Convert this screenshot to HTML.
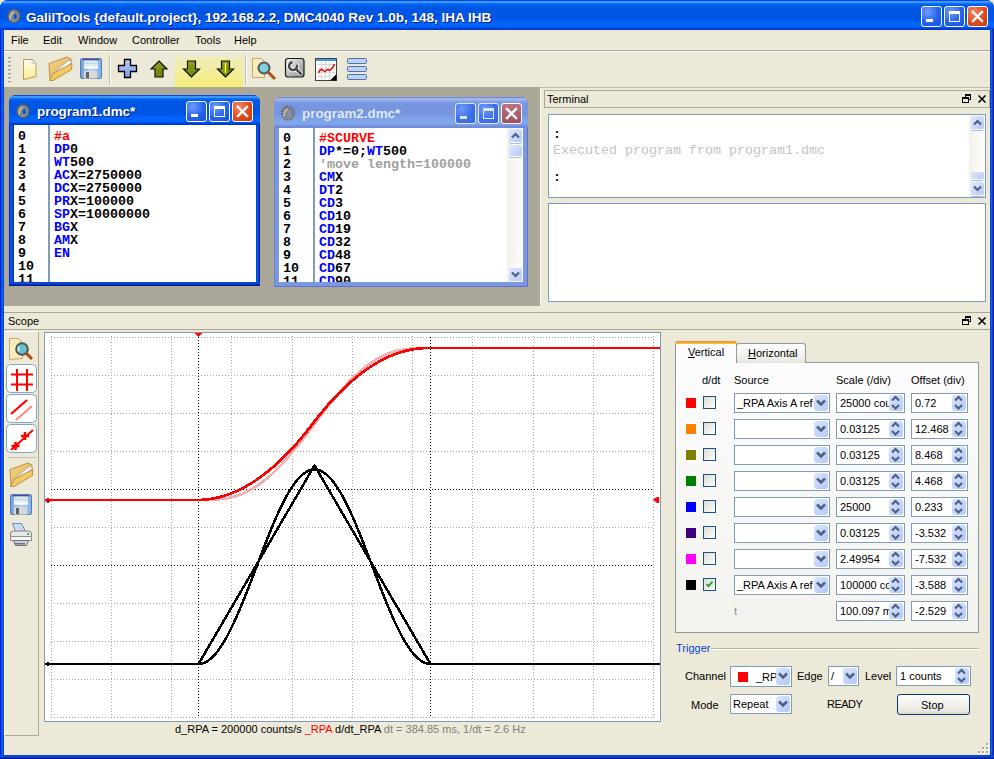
<!DOCTYPE html>
<html><head><meta charset="utf-8">
<style>
*{margin:0;padding:0;box-sizing:border-box}
html,body{width:994px;height:759px;overflow:hidden;background:#ece9d8}
body{position:relative;font-family:"Liberation Sans",sans-serif;font-size:11px;color:#000}
.a{position:absolute}
.t{position:absolute;white-space:nowrap;line-height:13px}
#frame{left:0;top:0;width:994px;height:759px;background:linear-gradient(to right,#0019cf 0,#0831d9 1px,#166aee 2px,#0855dd 3px,#0831d9 4px);border-radius:8px 8px 0 0;overflow:hidden}
#frameR{left:990px;top:29px;width:4px;height:730px;background:linear-gradient(to right,#0831d9 0,#0855dd 1px,#166aee 2px,#001ea0 3px)}
#frameB{left:0;top:755px;width:994px;height:4px;background:linear-gradient(to bottom,#0831d9 0,#0855dd 1px,#0a43c8 2px,#001ea0 3px)}
#title{left:0;top:0;width:994px;height:30px;border-radius:8px 8px 0 0;
 background:linear-gradient(to bottom,#0a48e0 0,#0a48e0 1px,#3d95ff 1px,#3d95ff 3px,#0a72ff 3.5px,#005ee9 5px,#0055e2 9px,#0054e3 19px,#0060f6 21px,#0066ff 26px,#0058f0 27.5px,#0040d8 28.5px,#0038c8 30px)}
#client{left:4px;top:30px;width:986px;height:725px;background:#ece9d8}
.ttl{color:#fff;font-weight:bold;text-shadow:1px 1px 0 #0a1f80}
.xpbtn{position:absolute;width:21px;height:21px;border:1px solid #fff;border-radius:3px;
 background:radial-gradient(circle at 30% 25%,#6f9cff 0,#2663ee 55%,#1c4fd8 100%)}
.xpclose{background:radial-gradient(circle at 30% 25%,#f08a6a 0,#e24c20 50%,#c63a0e 100%)}
.menu{top:34px}
.mdi{left:4px;top:87px;width:536px;height:219px;background:#aca899}
.code{font-family:"Liberation Mono",monospace;font-weight:bold;font-size:13.33px;line-height:13px}
.kw{color:#0000ff}.lb{color:#ff0000}.cm{color:#a0a0a0}
.cb{background:#fff;border:1px solid #7f9db9}
.dd{border-radius:3px;background:linear-gradient(135deg,#dbe5fd 0,#c6d6fb 50%,#b4c9f7 100%)}
.chk{width:13px;height:13px;border:1px solid #1c5180;background:linear-gradient(135deg,#dcdcd7 0,#f0f0ea 60%,#fff 100%)}
.sbb{border-radius:2px;background:linear-gradient(135deg,#e0e8fd 0,#c6d6fb 60%,#b7cbf8 100%);box-shadow:0 1px 0 #fff,0 2px 0 #a9bde6}
</style></head><body>
<div id="frame" class="a"></div>
<div id="title" class="a"></div>
<div id="frameR" class="a"></div>
<div id="frameB" class="a"></div>
<div id="client" class="a"></div>
<!-- TITLE -->
<svg class="a" style="left:6px;top:8px" width="16" height="16" viewBox="0 0 16 16"><defs><mask id="gm6"><rect width="16" height="16" fill="#fff"/><ellipse cx="9.2" cy="8.4" rx="1.5" ry="2.7" fill="#000"/></mask></defs><g mask="url(#gm6)"><polygon points="15.27,8.00 15.23,8.83 13.31,9.23 13.16,9.82 14.64,11.21 14.29,11.95 12.39,11.47 12.03,11.95 12.86,13.87 12.27,14.39 10.71,13.11 10.21,13.39 10.25,15.51 9.51,15.73 8.57,13.87 8.00,13.90 7.24,15.86 6.49,15.73 6.32,13.61 5.79,13.39 4.37,14.84 3.73,14.39 4.37,12.38 3.97,11.95 2.12,12.64 1.71,11.95 3.04,10.40 2.84,9.82 0.89,9.64 0.77,8.83 2.57,8.00 2.60,7.38 0.89,6.36 1.09,5.56 3.04,5.60 3.30,5.05 2.12,3.36 2.60,2.71 4.37,3.62 4.81,3.23 4.37,1.16 5.04,0.78 6.32,2.39 6.87,2.23 7.24,0.14 8.00,0.10 8.57,2.13 9.13,2.23 10.25,0.49 10.96,0.78 10.71,2.89 11.19,3.23 12.86,2.13 13.40,2.71 12.39,4.53 12.70,5.05 14.64,4.79 14.91,5.56 13.31,6.77 13.40,7.38" fill="#5e5e5e"/><ellipse cx="8" cy="8" rx="5.6" ry="6" fill="#858585"/><path d="M4.2 11.5q-0.5-5 3.5-7.5" stroke="#c4bfae" stroke-width="1.6" fill="none"/><path d="M6 13.2q4 1 6.2-3" stroke="#9a9484" stroke-width="1.2" fill="none"/></g></svg>
<div class="t ttl" style="left:26px;top:10px;font-size:13.5px;line-height:16px">GalilTools {default.project}, 192.168.2.2, DMC4040 Rev 1.0b, 148, IHA IHB</div>
<div class="xpbtn" style="left:921px;top:6px"><svg width="21" height="21" viewBox="0 0 21 21" style="position:absolute;left:-1px;top:-1px"><rect x="5" y="13" width="7" height="3" fill="#fff"/></svg></div>
<div class="xpbtn" style="left:944px;top:6px"><svg width="21" height="21" viewBox="0 0 21 21" style="position:absolute;left:-1px;top:-1px"><path d="M5 5h11v11H5z M6 8v7h9V8z" fill="#fff" fill-rule="evenodd"/></svg></div>
<div class="xpbtn xpclose" style="left:967px;top:6px"><svg width="21" height="21" viewBox="0 0 21 21" style="position:absolute;left:-1px;top:-1px"><path d="M6 6l9 9M15 6l-9 9" stroke="#fff" stroke-width="2.4" stroke-linecap="square"/></svg></div>

<!-- MENU -->
<div class="t menu" style="left:11px">File</div>
<div class="t menu" style="left:43px">Edit</div>
<div class="t menu" style="left:78px">Window</div>
<div class="t menu" style="left:132px">Controller</div>
<div class="t menu" style="left:195px">Tools</div>
<div class="t menu" style="left:234px">Help</div>
<div class="a" style="left:4px;top:50px;width:986px;height:1px;background:#aca899"></div>
<div class="a" style="left:4px;top:51px;width:986px;height:1px;background:#fff"></div>


<!-- TOOLBAR -->
<div class="a" style="left:8px;top:57px;width:3px;height:27px;background:repeating-linear-gradient(to bottom,#c1bea8 0,#8e8b7a 1px,#fff 2px,#ece9d8 3px,#ece9d8 4px)"></div>
<svg class="a" style="left:0;top:50px" width="400" height="40" viewBox="0 50 400 40">
 <defs>
  <linearGradient id="gdoc" x1="0" y1="0" x2="0" y2="1"><stop offset="0" stop-color="#fffff4"/><stop offset="1" stop-color="#f6ee88"/></linearGradient>
  <linearGradient id="gfold" x1="0" y1="0" x2="1" y2="1"><stop offset="0" stop-color="#f8d890"/><stop offset="1" stop-color="#d8a848"/></linearGradient>
  <linearGradient id="gsave" x1="0" y1="0" x2="1" y2="0"><stop offset="0" stop-color="#6aa0e0"/><stop offset="0.5" stop-color="#b8d8f8"/><stop offset="1" stop-color="#7ab0ea"/></linearGradient>
 </defs>
 <!-- new doc -->
 <path d="M23.5 59.5h9l3.5 3.5v13.5l-12.5 3z" fill="url(#gdoc)" stroke="#c09a50"/>
 <path d="M32 60v3.5h3.5" fill="#e8e8e8" stroke="#d0d0d0"/>
 <!-- open folder -->
 <path d="M49 63.5l18-6.5 4 2v5L50 80z" fill="url(#gfold)" stroke="#c09040"/>
 <path d="M51.5 74.5l17.5-14.5 2.5 2.5-17.5 14.5z" fill="#f4f4fa" stroke="#a8a8b8" stroke-width="0.7"/>
 <path d="M49.5 80.5l4-7.5 18.5-9.5-0.5 6-18.5 11z" fill="#f2ca64" stroke="#c09040"/>
 <!-- save -->
 <rect x="80.5" y="58.5" width="21" height="20" rx="1.5" fill="url(#gsave)" stroke="#5a7ab0"/>
 <rect x="83" y="59" width="16" height="1.5" fill="#4848a8"/>
 <rect x="84" y="60.5" width="14" height="8" fill="#dde8ec"/>
 <rect x="84" y="63" width="14" height="1" fill="#b8dce4"/>
 <rect x="84" y="66.5" width="14" height="2" fill="#ffffff"/>
 <rect x="84" y="71" width="13" height="7.5" fill="#d8d8d8"/>
 <rect x="86" y="72" width="3" height="6" fill="#606060"/>
 <line x1="109.5" y1="55" x2="109.5" y2="85" stroke="#c5c2b0"/>
 <line x1="110.5" y1="55" x2="110.5" y2="85" stroke="#fff"/>
 <!-- plus -->
 <defs><linearGradient id="golive" x1="0" y1="0" x2="1" y2="1"><stop offset="0" stop-color="#9ab028"/><stop offset="1" stop-color="#5e7400"/></linearGradient>
 <linearGradient id="ghl" x1="0" y1="0" x2="0" y2="1"><stop offset="0" stop-color="#efecc0"/><stop offset="1" stop-color="#f5ef78"/></linearGradient>
 <linearGradient id="gplus" x1="0" y1="0" x2="0" y2="1"><stop offset="0" stop-color="#b8ccf8"/><stop offset="1" stop-color="#7a9ae8"/></linearGradient></defs>
 <path d="M124.5 59.5h6v6h6v6h-6v6h-6v-6h-6v-6h6z" fill="url(#gplus)" stroke="#000" stroke-width="1.3"/>
 <!-- up arrow -->
 <path d="M159 61l8 8h-4v8h-8v-8h-4z" fill="url(#golive)" stroke="#101000" stroke-width="1.2"/>
 <!-- highlight -->
 <rect x="175" y="56" width="68" height="31" fill="url(#ghl)"/>
 <path d="M187.5 61h8v8h4l-8 8-8-8h4z" fill="url(#golive)" stroke="#101000" stroke-width="1.2"/>
 <path d="M221.5 61h8v8h4l-8 8-8-8h4z" fill="url(#golive)" stroke="#101000" stroke-width="1.2"/>
 <line x1="225.5" y1="63" x2="225.5" y2="73" stroke="#ffff30" stroke-width="1.5"/>
 <line x1="245.5" y1="55" x2="245.5" y2="85" stroke="#c5c2b0"/>
 <line x1="246.5" y1="55" x2="246.5" y2="85" stroke="#fff"/>
 <!-- magnifier doc -->
 <path d="M252.5 58.5h9l3 3v16h-12z" fill="#f7ecc0" stroke="#c9a560"/>
 <circle cx="264" cy="68" r="5.5" fill="#7dd0dc" stroke="#555" stroke-width="2"/>
 <path d="M268 72l7 7" stroke="#b05010" stroke-width="3"/>
 <!-- wrench -->
 <defs><linearGradient id="gwr" x1="0" y1="0" x2="1" y2="1"><stop offset="0" stop-color="#f4f4f4"/><stop offset="1" stop-color="#8a8a8a"/></linearGradient></defs>
 <rect x="285.5" y="58.5" width="18.5" height="18.5" rx="2.5" fill="url(#gwr)" stroke="#1a1a1a" stroke-width="1.2"/>
 <path d="M296.8 64.6A4 4 0 1 1 292.3 62.1M295.5 68.5l6 6" fill="none" stroke="#fff" stroke-width="4.4"/>
 <path d="M296.8 64.6A4 4 0 1 1 292.3 62.1M295.5 68.5l6 6" fill="none" stroke="#4a4a4a" stroke-width="2.6"/>
 <!-- chart -->
 <rect x="315.5" y="58.5" width="21" height="22" fill="#fff" stroke="#444"/>
 <rect x="316" y="59" width="20" height="2" fill="#3a9ae8"/>
 <path d="M318 64.5h17M318 68.5h17M318 72.5h17M318 76.5h13M321.5 62v17M325.5 62v17M329.5 62v17" stroke="#d8d8d8" stroke-width="1"/>
 <path d="M318.5 73q2-5 4-3t3 1q2-2 3-1t3-1q2-2 3-5" fill="none" stroke="#e81010" stroke-width="1.6"/>
 <path d="M330 80.5l6.5-6.5v6.5z" fill="#000"/>
 <!-- list -->
 <rect x="347.5" y="58.5" width="19" height="5" rx="1" fill="#bcd4f4" stroke="#5070a8"/>
 <rect x="347.5" y="66.5" width="19" height="5" rx="1" fill="#bcd4f4" stroke="#5070a8"/>
 <rect x="347.5" y="74.5" width="19" height="5" rx="1" fill="#bcd4f4" stroke="#5070a8"/>
</svg>

<!-- MDI -->

<div class="a mdi"></div>
<!-- program1 active -->
<div class="a" style="left:9px;top:95px;width:251px;height:191px;border-radius:7px 7px 0 0;background:linear-gradient(to right,#0019cf 0,#0831d9 1px,#166aee 2px,#0855dd 3px,#0831d9 4px,#0831d9 247px,#0855dd 248px,#166aee 249px,#001ea0 250px)"></div>
<div class="a" style="left:9px;top:95px;width:251px;height:30px;border-radius:7px 7px 0 0;background:linear-gradient(to bottom,#0a48e0 0,#0a48e0 1px,#3d95ff 1px,#3d95ff 3px,#0a72ff 3.5px,#005ee9 5px,#0055e2 9px,#0054e3 19px,#0060f6 21px,#0066ff 26px,#0058f0 27.5px,#0040d8 28.5px,#0038c8 30px)"></div>
<div class="a" style="left:9px;top:282px;width:251px;height:4px;background:linear-gradient(to bottom,#0831d9 0,#0855dd 1px,#0a43c8 2px,#001ea0 3px)"></div>
<svg class="a" style="left:15px;top:103px" width="16" height="16" viewBox="0 0 16 16"><defs><mask id="gm15"><rect width="16" height="16" fill="#fff"/><ellipse cx="9.2" cy="8.4" rx="1.5" ry="2.7" fill="#000"/></mask></defs><g mask="url(#gm15)"><polygon points="15.27,8.00 15.23,8.83 13.31,9.23 13.16,9.82 14.64,11.21 14.29,11.95 12.39,11.47 12.03,11.95 12.86,13.87 12.27,14.39 10.71,13.11 10.21,13.39 10.25,15.51 9.51,15.73 8.57,13.87 8.00,13.90 7.24,15.86 6.49,15.73 6.32,13.61 5.79,13.39 4.37,14.84 3.73,14.39 4.37,12.38 3.97,11.95 2.12,12.64 1.71,11.95 3.04,10.40 2.84,9.82 0.89,9.64 0.77,8.83 2.57,8.00 2.60,7.38 0.89,6.36 1.09,5.56 3.04,5.60 3.30,5.05 2.12,3.36 2.60,2.71 4.37,3.62 4.81,3.23 4.37,1.16 5.04,0.78 6.32,2.39 6.87,2.23 7.24,0.14 8.00,0.10 8.57,2.13 9.13,2.23 10.25,0.49 10.96,0.78 10.71,2.89 11.19,3.23 12.86,2.13 13.40,2.71 12.39,4.53 12.70,5.05 14.64,4.79 14.91,5.56 13.31,6.77 13.40,7.38" fill="#5e5e5e"/><ellipse cx="8" cy="8" rx="5.6" ry="6" fill="#858585"/><path d="M4.2 11.5q-0.5-5 3.5-7.5" stroke="#c4bfae" stroke-width="1.6" fill="none"/><path d="M6 13.2q4 1 6.2-3" stroke="#9a9484" stroke-width="1.2" fill="none"/></g></svg>
<div class="t ttl" style="left:37px;top:104px;font-size:13.4px;line-height:15px">program1.dmc*</div>
<div class="xpbtn" style="left:186px;top:101px"><svg width="21" height="21" viewBox="0 0 21 21" style="position:absolute;left:-1px;top:-1px"><rect x="5" y="13" width="7" height="3" fill="#fff"/></svg></div>
<div class="xpbtn" style="left:209px;top:101px"><svg width="21" height="21" viewBox="0 0 21 21" style="position:absolute;left:-1px;top:-1px"><path d="M5 5h11v11H5z M6 8v7h9V8z" fill="#fff" fill-rule="evenodd"/></svg></div>
<div class="xpbtn xpclose" style="left:232px;top:101px"><svg width="21" height="21" viewBox="0 0 21 21" style="position:absolute;left:-1px;top:-1px"><path d="M6 6l9 9M15 6l-9 9" stroke="#fff" stroke-width="2.4" stroke-linecap="square"/></svg></div>
<div class="a" style="left:14px;top:125px;width:242px;height:157px;background:#fff;overflow:hidden">
 <div class="a" style="left:34px;top:0;width:2px;height:157px;background:#7f9db9"></div>
 <div class="t code" style="left:4px;top:5px;line-height:13px">0<br>1<br>2<br>3<br>4<br>5<br>6<br>7<br>8<br>9<br>10<br>11</div>
 <div class="t code" style="left:40px;top:5px;line-height:13px"><span class="lb">#a</span><br><span class="kw">DP</span>0<br><span class="kw">WT</span>500<br><span class="kw">AC</span>X=2750000<br><span class="kw">DC</span>X=2750000<br><span class="kw">PR</span>X=100000<br><span class="kw">SP</span>X=10000000<br><span class="kw">BG</span>X<br><span class="kw">AM</span>X<br><span class="kw">EN</span><br>&nbsp;<br>&nbsp;</div>
</div>
<!-- program2 inactive -->
<div class="a" style="left:274px;top:97px;width:254px;height:190px;border-radius:7px 7px 0 0;background:#7b97e0;box-shadow:inset -1px -1px 0 #5f6fd6,inset 1px 0 0 #6f86dc"></div>
<div class="a" style="left:274px;top:97px;width:254px;height:31px;border-radius:7px 7px 0 0;background:linear-gradient(to bottom,#6f86dc 0,#6f86dc 1px,#9cb6ec 1px,#9cb6ec 3px,#84a0e6 4.5px,#7896df 7px,#7896df 18px,#7ea4e8 22px,#80a8ea 27px,#7290dc 29px,#6f86d8 31px)"></div>
<svg class="a" style="left:280px;top:105px" width="16" height="16" viewBox="0 0 16 16"><defs><mask id="gm280"><rect width="16" height="16" fill="#fff"/><ellipse cx="9.2" cy="8.4" rx="1.5" ry="2.7" fill="#000"/></mask></defs><g mask="url(#gm280)"><polygon points="15.27,8.00 15.23,8.83 13.31,9.23 13.16,9.82 14.64,11.21 14.29,11.95 12.39,11.47 12.03,11.95 12.86,13.87 12.27,14.39 10.71,13.11 10.21,13.39 10.25,15.51 9.51,15.73 8.57,13.87 8.00,13.90 7.24,15.86 6.49,15.73 6.32,13.61 5.79,13.39 4.37,14.84 3.73,14.39 4.37,12.38 3.97,11.95 2.12,12.64 1.71,11.95 3.04,10.40 2.84,9.82 0.89,9.64 0.77,8.83 2.57,8.00 2.60,7.38 0.89,6.36 1.09,5.56 3.04,5.60 3.30,5.05 2.12,3.36 2.60,2.71 4.37,3.62 4.81,3.23 4.37,1.16 5.04,0.78 6.32,2.39 6.87,2.23 7.24,0.14 8.00,0.10 8.57,2.13 9.13,2.23 10.25,0.49 10.96,0.78 10.71,2.89 11.19,3.23 12.86,2.13 13.40,2.71 12.39,4.53 12.70,5.05 14.64,4.79 14.91,5.56 13.31,6.77 13.40,7.38" fill="#5e5e5e"/><ellipse cx="8" cy="8" rx="5.6" ry="6" fill="#858585"/><path d="M4.2 11.5q-0.5-5 3.5-7.5" stroke="#c4bfae" stroke-width="1.6" fill="none"/><path d="M6 13.2q4 1 6.2-3" stroke="#9a9484" stroke-width="1.2" fill="none"/></g></svg>
<div class="t ttl" style="left:302px;top:106px;font-size:13.4px;line-height:15px;color:#dfe8fb;text-shadow:none">program2.dmc*</div>
<div class="xpbtn" style="left:455px;top:103px;opacity:.75"><svg width="21" height="21" viewBox="0 0 21 21" style="position:absolute;left:-1px;top:-1px"><rect x="5" y="13" width="7" height="3" fill="#fff"/></svg></div>
<div class="xpbtn" style="left:478px;top:103px;opacity:.75"><svg width="21" height="21" viewBox="0 0 21 21" style="position:absolute;left:-1px;top:-1px"><path d="M5 5h11v11H5z M6 8v7h9V8z" fill="#fff" fill-rule="evenodd"/></svg></div>
<div class="xpbtn" style="left:501px;top:103px;background:linear-gradient(#c07080,#a05060)"><svg width="21" height="21" viewBox="0 0 21 21" style="position:absolute;left:-1px;top:-1px"><path d="M6 6l9 9M15 6l-9 9" stroke="#fff" stroke-width="2.4" stroke-linecap="square"/></svg></div>
<div class="a" style="left:279px;top:128px;width:244px;height:154px;background:#fff;overflow:hidden">
 <div class="a" style="left:34px;top:0;width:2px;height:154px;background:#7f9db9"></div>
 <div class="t code" style="left:4px;top:4px;line-height:13px">0<br>1<br>2<br>3<br>4<br>5<br>6<br>7<br>8<br>9<br>10<br>11</div>
 <div class="t code" style="left:40px;top:4px;line-height:13px"><span class="lb">#SCURVE</span><br><span class="kw">DP</span>*=0;<span class="kw">WT</span>500<br><span class="cm">'move length=100000</span><br><span class="kw">CM</span>X<br><span class="kw">DT</span>2<br><span class="kw">CD</span>3<br><span class="kw">CD</span>10<br><span class="kw">CD</span>19<br><span class="kw">CD</span>32<br><span class="kw">CD</span>48<br><span class="kw">CD</span>67<br><span class="kw">CD</span>90</div>
 <div class="a" style="left:228px;top:0;width:16px;height:154px;background:linear-gradient(to right,#f3f1ec,#fefefe)"></div>
 <div class="a sbb" style="left:230px;top:1px;width:13px;height:13px"><svg width="9" height="7" viewBox="0 0 9 7" style="position:absolute;left:2px;top:3px"><path d="M1 5.5l3.5-3.5 3.5 3.5" fill="none" stroke="#4d6185" stroke-width="2.2"/></svg></div>
 <div class="a sbb" style="left:230px;top:17px;width:13px;height:11px"></div>
 <div class="a sbb" style="left:230px;top:140px;width:13px;height:13px"><svg width="9" height="7" viewBox="0 0 9 7" style="position:absolute;left:2px;top:3px"><path d="M1 1.5l3.5 3.5 3.5-3.5" fill="none" stroke="#4d6185" stroke-width="2.2"/></svg></div>
</div>



<!-- TERMINAL -->
<div class="a" style="left:540px;top:87px;width:450px;height:1px;background:#c2bfae"></div>
<div class="a" style="left:540px;top:88px;width:1px;height:217px;background:#f8f7f0"></div>
<div class="a" style="left:544px;top:90px;width:446px;height:18px;border:1px solid #aca899"></div>
<div class="t" style="left:547px;top:93px">Terminal</div>
<svg class="a" style="left:962px;top:94px" width="26" height="10" viewBox="0 0 26 10">
 <rect x="3.5" y="0.5" width="5" height="5" fill="none" stroke="#000"/><rect x="3" y="0" width="6" height="2" fill="#000"/>
 <rect x="0.5" y="3.5" width="6" height="5" fill="#ece9d8" stroke="#000"/><rect x="0" y="3" width="7" height="2" fill="#000"/>
 <path d="M16.5 1.5l7 7M23.5 1.5l-7 7" stroke="#000" stroke-width="1.6"/></svg>
<div class="a" style="left:548px;top:114px;width:438px;height:84px;background:#fff;border:1px solid #7f9db9"></div>
<div class="t code" style="left:553px;top:128px">:</div>
<div class="t" style="left:553px;top:144px;font-family:'Liberation Mono',monospace;font-size:13.33px;color:#c4c4c4">Executed program from program1.dmc</div>
<div class="t code" style="left:553px;top:171px">:</div>
<div class="a" style="left:969px;top:115px;width:16px;height:82px;background:linear-gradient(to right,#f3f1ec,#fefefe)"></div>
<div class="a sbb" style="left:971px;top:116px;width:13px;height:13px"><svg width="9" height="7" viewBox="0 0 9 7" style="position:absolute;left:2px;top:3px"><path d="M1 5.5l3.5-3.5 3.5 3.5" fill="none" stroke="#4d6185" stroke-width="2.2"/></svg></div>
<div class="a sbb" style="left:971px;top:172px;width:13px;height:7px"></div>
<div class="a sbb" style="left:971px;top:182px;width:13px;height:13px"><svg width="9" height="7" viewBox="0 0 9 7" style="position:absolute;left:2px;top:3px"><path d="M1 1.5l3.5 3.5 3.5-3.5" fill="none" stroke="#4d6185" stroke-width="2.2"/></svg></div>
<div class="a" style="left:548px;top:203px;width:438px;height:99px;background:#fff;border:1px solid #7f9db9"></div>

<!-- SCOPE -->
<div class="a" style="left:4px;top:312px;width:986px;height:18px;border-top:1px solid #aca899;border-bottom:1px solid #aca899"></div>
<div class="t" style="left:8px;top:315px">Scope</div>
<svg class="a" style="left:962px;top:316px" width="26" height="10" viewBox="0 0 26 10">
 <rect x="3.5" y="0.5" width="5" height="5" fill="none" stroke="#000"/><rect x="3" y="0" width="6" height="2" fill="#000"/>
 <rect x="0.5" y="3.5" width="6" height="5" fill="#ece9d8" stroke="#000"/><rect x="0" y="3" width="7" height="2" fill="#000"/>
 <path d="M16.5 1.5l7 7M23.5 1.5l-7 7" stroke="#000" stroke-width="1.6"/></svg>

<!-- SCOPETB -->
<div class="a" style="left:4px;top:331px;width:35px;height:405px;border-top:1px solid #fff;border-left:1px solid #fff;border-right:1px solid #aca899;border-bottom:1px solid #aca899"></div>
<svg class="a" style="left:4px;top:331px" width="35" height="230" viewBox="4 331 35 230">
 <!-- magnifier -->
 <path d="M9.5 338.5h9l4 4v16l-13 1z" fill="#f7ecc0" stroke="#c9a560"/>
 <circle cx="22" cy="349" r="5.8" fill="#66c2cc" stroke="#505050" stroke-width="2"/>
 <path d="M18.5 346.5v5" stroke="#c9f0f4" stroke-width="2"/>
 <path d="M26 353l6 6" stroke="#b04e10" stroke-width="3"/>
 <!-- buttons -->
 <rect x="6.5" y="364.5" width="30" height="28" rx="4" fill="#fff" stroke="#8aa4c4"/>
 <rect x="6.5" y="394.5" width="30" height="28" rx="4" fill="#fff" stroke="#8aa4c4"/>
 <rect x="6.5" y="424.5" width="30" height="28" rx="4" fill="#fff" stroke="#8aa4c4"/>
 <path d="M11 374.5h22M11 384.5h22M17 369v22M27 369v22" stroke="#f00" stroke-width="2"/>
 <path d="M11 414l16-14" stroke="#f00" stroke-width="2.2"/>
 <path d="M16 420l16-14" stroke="#f88" stroke-width="2.2"/>
 <path d="M11 450l22-20" stroke="#f00" stroke-width="2"/>
 <path d="M11.5 446h8M15.5 442v8M21 436h8M25 432v8" stroke="#f00" stroke-width="2.6"/>
 <line x1="8" y1="457.5" x2="36" y2="457.5" stroke="#c5c2b0"/>
 <!-- folder -->
 <g transform="translate(-39 406)">
 <path d="M49 63.5l18-6.5 4 2v5L50 80z" fill="url(#gfold)" stroke="#c09040"/>
 <path d="M51.5 74.5l17.5-14.5 2.5 2.5-17.5 14.5z" fill="#f4f4fa" stroke="#a8a8b8" stroke-width="0.7"/>
 <path d="M49.5 80.5l4-7.5 18.5-9.5-0.5 6-18.5 11z" fill="#f2ca64" stroke="#c09040"/>
 </g>
 <!-- save -->
 <g transform="translate(-70 436)">
 <rect x="80.5" y="58.5" width="21" height="20" rx="1.5" fill="url(#gsave)" stroke="#5a7ab0"/>
 <rect x="83" y="59" width="16" height="1.5" fill="#4848a8"/>
 <rect x="84" y="60.5" width="14" height="8" fill="#dde8ec"/>
 <rect x="84" y="63" width="14" height="1" fill="#b8dce4"/>
 <rect x="84" y="66.5" width="14" height="2" fill="#ffffff"/>
 <rect x="84" y="71" width="13" height="7.5" fill="#d8d8d8"/>
 <rect x="86" y="72" width="3" height="6" fill="#606060"/>
 </g>
 <!-- printer -->
 <path d="M12.5 523.5h9l4.5 9h-10z" fill="#c8dcfa" stroke="#6a8ac0"/>
 <path d="M10.5 534q0-3 3-3h15q3 0 3 3v6.5h-21z" fill="#e8e8e8" stroke="#808080"/>
 <rect x="10.5" y="536.5" width="21" height="4" fill="#f4f4f4" stroke="#909090"/>
 <path d="M13.5 540.5h15l-2 5h-11z" fill="#d0d0d0" stroke="#707070"/>
 <rect x="15" y="543" width="10" height="1.5" fill="#6a6aa0"/>
 <rect x="27" y="533" width="2" height="2" fill="#40c040"/>
</svg>
<!-- /SCOPETB -->
<!-- PLOT -->
<svg class="a" style="left:44px;top:332px" width="617" height="390" viewBox="44 332 617 390" shape-rendering="crispEdges">
<rect x="44.5" y="332.5" width="616" height="389" fill="#fff" stroke="#7f9db9"/>
<line x1="51.5" y1="336" x2="51.5" y2="718" stroke="#a8a8a8" stroke-dasharray="1 2"/>
<line x1="111.5" y1="336" x2="111.5" y2="718" stroke="#a8a8a8" stroke-dasharray="1 2"/>
<line x1="171.5" y1="336" x2="171.5" y2="718" stroke="#a8a8a8" stroke-dasharray="1 2"/>
<line x1="231.5" y1="336" x2="231.5" y2="718" stroke="#a8a8a8" stroke-dasharray="1 2"/>
<line x1="292.5" y1="336" x2="292.5" y2="718" stroke="#a8a8a8" stroke-dasharray="1 2"/>
<line x1="352.5" y1="336" x2="352.5" y2="718" stroke="#a8a8a8" stroke-dasharray="1 2"/>
<line x1="412.5" y1="336" x2="412.5" y2="718" stroke="#a8a8a8" stroke-dasharray="1 2"/>
<line x1="472.5" y1="336" x2="472.5" y2="718" stroke="#a8a8a8" stroke-dasharray="1 2"/>
<line x1="533.5" y1="336" x2="533.5" y2="718" stroke="#a8a8a8" stroke-dasharray="1 2"/>
<line x1="593.5" y1="336" x2="593.5" y2="718" stroke="#a8a8a8" stroke-dasharray="1 2"/>
<line x1="653.5" y1="336" x2="653.5" y2="718" stroke="#a8a8a8" stroke-dasharray="1 2"/>
<line x1="51" y1="337.5" x2="654" y2="337.5" stroke="#a8a8a8" stroke-dasharray="1 2"/>
<line x1="51" y1="375.5" x2="654" y2="375.5" stroke="#a8a8a8" stroke-dasharray="1 2"/>
<line x1="51" y1="413.5" x2="654" y2="413.5" stroke="#a8a8a8" stroke-dasharray="1 2"/>
<line x1="51" y1="451.5" x2="654" y2="451.5" stroke="#a8a8a8" stroke-dasharray="1 2"/>
<line x1="51" y1="489.5" x2="654" y2="489.5" stroke="#a8a8a8" stroke-dasharray="1 2"/>
<line x1="51" y1="527.5" x2="654" y2="527.5" stroke="#a8a8a8" stroke-dasharray="1 2"/>
<line x1="51" y1="565.5" x2="654" y2="565.5" stroke="#a8a8a8" stroke-dasharray="1 2"/>
<line x1="51" y1="603.5" x2="654" y2="603.5" stroke="#a8a8a8" stroke-dasharray="1 2"/>
<line x1="51" y1="641.5" x2="654" y2="641.5" stroke="#a8a8a8" stroke-dasharray="1 2"/>
<line x1="51" y1="679.5" x2="654" y2="679.5" stroke="#a8a8a8" stroke-dasharray="1 2"/>
<line x1="51" y1="717.5" x2="654" y2="717.5" stroke="#a8a8a8" stroke-dasharray="1 2"/>
<line x1="198.5" y1="337" x2="198.5" y2="718" stroke="#000" stroke-dasharray="1 2"/>
<line x1="430.5" y1="337" x2="430.5" y2="718" stroke="#000" stroke-dasharray="1 2"/>
<line x1="51" y1="489.5" x2="654" y2="489.5" stroke="#000" stroke-dasharray="1 2"/>
<line x1="51" y1="565.5" x2="654" y2="565.5" stroke="#000" stroke-dasharray="1 2"/>
</svg>
<svg class="a" style="left:44px;top:332px" width="617" height="390" viewBox="44 332 617 390">
<defs><clipPath id="pc"><rect x="45" y="333" width="615" height="388"/></clipPath></defs><g clip-path="url(#pc)" fill="none" stroke-linejoin="round" shape-rendering="crispEdges">
<polyline points="45.0,500.0 198.5,500.0 201.4,500.0 204.3,500.0 207.2,499.9 210.1,499.9 213.0,499.8 215.9,499.6 218.8,499.3 221.7,499.0 224.6,498.6 227.5,498.1 230.4,497.5 233.3,496.8 236.2,495.9 239.1,495.0 242.0,493.9 244.9,492.6 247.8,491.2 250.7,489.7 253.6,488.0 256.5,486.2 259.4,484.2 262.3,482.1 265.2,479.8 268.1,477.4 271.0,474.9 273.9,472.2 276.8,469.3 279.7,466.4 282.6,463.3 285.5,460.1 288.4,456.8 291.3,453.4 294.2,449.9 297.1,446.4 300.0,442.8 302.9,439.1 305.8,435.3 308.7,431.6 311.6,427.8 314.5,424.0 317.4,420.2 320.3,416.4 323.2,412.7 326.1,408.9 329.0,405.2 331.9,401.6 334.8,398.1 337.7,394.6 340.6,391.2 343.5,387.9 346.4,384.7 349.3,381.6 352.2,378.7 355.1,375.8 358.0,373.1 360.9,370.6 363.8,368.2 366.7,365.9 369.6,363.8 372.5,361.8 375.4,360.0 378.3,358.3 381.2,356.8 384.1,355.4 387.0,354.1 389.9,353.0 392.8,352.1 395.7,351.2 398.6,350.5 401.5,349.9 404.4,349.4 407.3,349.0 410.2,348.7 413.1,348.4 416.0,348.2 418.9,348.1 421.8,348.1 424.7,348.0 427.6,348.0 430.5,348.0 660.0,348.0" stroke="#f4b0b0" stroke-width="2.7"/>
<polyline points="45.0,500.0 197.0,500.0 199.9,500.0 202.8,499.8 205.7,499.6 208.6,499.2 211.4,498.8 214.3,498.3 217.2,497.7 220.1,497.0 223.0,496.2 225.9,495.2 228.8,494.3 231.7,493.2 234.5,492.0 237.4,490.7 240.3,489.3 243.2,487.8 246.1,486.3 249.0,484.6 251.9,482.9 254.8,481.0 257.6,479.1 260.5,477.0 263.4,474.9 266.3,472.6 269.2,470.3 272.1,467.9 275.0,465.4 277.9,462.8 280.7,460.1 283.6,457.2 286.5,454.4 289.4,451.4 292.3,448.3 295.2,445.1 298.1,441.8 300.9,438.4 303.8,435.0 306.7,431.4 309.6,427.8 312.5,424.0 315.4,420.2 318.3,416.6 321.2,413.0 324.1,409.6 326.9,406.2 329.8,402.9 332.7,399.7 335.6,396.6 338.5,393.6 341.4,390.8 344.3,387.9 347.1,385.2 350.0,382.6 352.9,380.1 355.8,377.7 358.7,375.4 361.6,373.1 364.5,371.0 367.4,368.9 370.2,367.0 373.1,365.1 376.0,363.4 378.9,361.7 381.8,360.2 384.7,358.7 387.6,357.3 390.5,356.0 393.4,354.8 396.2,353.7 399.1,352.8 402.0,351.8 404.9,351.0 407.8,350.3 410.7,349.7 413.6,349.2 416.4,348.8 419.3,348.4 422.2,348.2 425.1,348.0 428.0,348.0 660.0,348.0" stroke="#f00" stroke-width="2.7"/>
<polyline points="45.0,664.0 198.5,664.0 201.4,659.0 204.3,654.1 207.2,649.1 210.1,644.1 213.0,639.2 215.9,634.2 218.8,629.3 221.7,624.3 224.6,619.3 227.5,614.4 230.4,609.4 233.3,604.5 236.2,599.5 239.1,594.5 242.0,589.6 244.9,584.6 247.8,579.6 250.7,574.7 253.6,569.7 256.5,564.8 259.4,559.8 262.3,554.8 265.2,549.9 268.1,544.9 271.0,539.9 273.9,535.0 276.8,530.0 279.7,525.0 282.6,520.1 285.5,515.1 288.4,510.2 291.3,505.2 294.2,500.2 297.1,495.3 300.0,490.3 302.9,485.4 305.8,480.4 308.7,475.4 311.6,470.5 314.5,465.5 317.4,470.5 320.3,475.4 323.2,480.4 326.1,485.4 329.0,490.3 331.9,495.3 334.8,500.2 337.7,505.2 340.6,510.2 343.5,515.1 346.4,520.1 349.3,525.0 352.2,530.0 355.1,535.0 358.0,539.9 360.9,544.9 363.8,549.9 366.7,554.8 369.6,559.8 372.5,564.8 375.4,569.7 378.3,574.7 381.2,579.6 384.1,584.6 387.0,589.6 389.9,594.5 392.8,599.5 395.7,604.5 398.6,609.4 401.5,614.4 404.4,619.3 407.3,624.3 410.2,629.3 413.1,634.2 416.0,639.2 418.9,644.1 421.8,649.1 424.7,654.1 427.6,659.0 430.5,664.0 660.0,664.0" stroke="#000" stroke-width="2.5"/>
<polyline points="45.0,664.0 198.5,664.0 201.4,663.7 204.3,662.8 207.2,661.3 210.1,659.2 213.0,656.6 215.9,653.4 218.8,649.7 221.7,645.4 224.6,640.7 227.5,635.5 230.4,629.9 233.3,623.9 236.2,617.6 239.1,610.9 242.0,604.0 244.9,596.8 247.8,589.5 250.7,582.0 253.6,574.4 256.5,566.8 259.4,559.1 262.3,551.5 265.2,544.0 268.1,536.7 271.0,529.5 273.9,522.6 276.8,515.9 279.7,509.6 282.6,503.6 285.5,498.0 288.4,492.8 291.3,488.1 294.2,483.8 297.1,480.1 300.0,476.9 302.9,474.3 305.8,472.2 308.7,470.7 311.6,469.8 314.5,469.5 317.4,469.8 320.3,470.7 323.2,472.2 326.1,474.3 329.0,476.9 331.9,480.1 334.8,483.8 337.7,488.1 340.6,492.8 343.5,498.0 346.4,503.6 349.3,509.6 352.2,515.9 355.1,522.6 358.0,529.5 360.9,536.7 363.8,544.0 366.7,551.5 369.6,559.1 372.5,566.8 375.4,574.4 378.3,582.0 381.2,589.5 384.1,596.8 387.0,604.0 389.9,610.9 392.8,617.6 395.7,623.9 398.6,629.9 401.5,635.5 404.4,640.7 407.3,645.4 410.2,649.7 413.1,653.4 416.0,656.6 418.9,659.2 421.8,661.3 424.7,662.8 427.6,663.7 430.5,664.0 660.0,664.0" stroke="#000" stroke-width="2.5"/>
</g>
<path d="M198.5 337l-4-4h8z" fill="#f00"/>
<path d="M46 499h1v-1h2v1h1v3h-1v1h-2v-1h-1z" fill="#f00" shape-rendering="crispEdges"/>
<path d="M653 499.5l4-2.5h2v6h-2z" fill="#f00"/>
<path d="M46 663h1v-1h2v1h1v2h-1v1h-2v-1h-1z" fill="#000" shape-rendering="crispEdges"/>
</svg>
<!-- /PLOT -->
<!-- PANEL -->
<div class="a" style="left:675px;top:362px;width:304px;height:271px;border:1px solid #919b9c;background:linear-gradient(to bottom,#fcfcfe 0,#f6f6f4 60%,#f3f2ed 100%)"></div>
<div class="a" style="left:736px;top:343px;width:70px;height:20px;border:1px solid #919b9c;border-bottom:none;border-radius:3px 3px 0 0;background:linear-gradient(to bottom,#fff,#f0efea 70%,#e6e4dc)"></div>
<div class="a" style="left:675px;top:341px;width:62px;height:22px;border:1px solid #919b9c;border-bottom:none;border-top:none;border-radius:3px 3px 0 0;background:#fcfcfe"></div>
<div class="a" style="left:675px;top:341px;width:62px;height:3px;border-radius:3px 3px 0 0;background:linear-gradient(#e68b2c,#ffc73c)"></div>
<div class="t" style="left:688px;top:346px"><u>V</u>ertical</div>
<div class="t" style="left:748px;top:347px"><u>H</u>orizontal</div>
<div class="t" style="left:702px;top:374px">d/dt</div>
<div class="t" style="left:734px;top:374px">Source</div>
<div class="t" style="left:836px;top:374px">Scale (/div)</div>
<div class="t" style="left:911px;top:374px">Offset (div)</div>
<div class="a" style="left:686px;top:398px;width:10px;height:10px;background:#ff0000"></div>
<div class="a chk" style="left:703px;top:396px"></div>
<div class="a cb" style="left:734px;top:393px;width:96px;height:20px"><div class="t" style="left:2px;top:3px">_RPA Axis A ref</div><div class="a dd" style="left:79px;top:1px;width:14px;height:16px"><svg width="14" height="16" viewBox="0 0 14 16" style="position:absolute;left:0;top:0"><path d="M3 5.5l4 4 4-4" fill="none" stroke="#4d6185" stroke-width="2.6"/></svg></div></div>
<div class="a cb" style="left:836px;top:393px;width:69px;height:20px;overflow:hidden"><div class="t" style="left:3px;top:3px">25000 cou</div><div class="a dd" style="left:52px;top:1px;width:14px;height:16px"><svg width="14" height="16" viewBox="0 0 14 16" style="position:absolute;left:0;top:0"><path d="M3 5.5l3.5-3.5 3.5 3.5M3 10l3.5 3.5 3.5-3.5" fill="none" stroke="#4d6185" stroke-width="2.2"/></svg></div></div>
<div class="a cb" style="left:911px;top:393px;width:57px;height:20px;overflow:hidden"><div class="t" style="left:3px;top:3px">0.72</div><div class="a dd" style="left:40px;top:1px;width:14px;height:16px"><svg width="14" height="16" viewBox="0 0 14 16" style="position:absolute;left:0;top:0"><path d="M3 5.5l3.5-3.5 3.5 3.5M3 10l3.5 3.5 3.5-3.5" fill="none" stroke="#4d6185" stroke-width="2.2"/></svg></div></div>
<div class="a" style="left:686px;top:424px;width:10px;height:10px;background:#ff8000"></div>
<div class="a chk" style="left:703px;top:422px"></div>
<div class="a cb" style="left:734px;top:419px;width:96px;height:20px"><div class="t" style="left:2px;top:3px"></div><div class="a dd" style="left:79px;top:1px;width:14px;height:16px"><svg width="14" height="16" viewBox="0 0 14 16" style="position:absolute;left:0;top:0"><path d="M3 5.5l4 4 4-4" fill="none" stroke="#4d6185" stroke-width="2.6"/></svg></div></div>
<div class="a cb" style="left:836px;top:419px;width:69px;height:20px;overflow:hidden"><div class="t" style="left:3px;top:3px">0.03125</div><div class="a dd" style="left:52px;top:1px;width:14px;height:16px"><svg width="14" height="16" viewBox="0 0 14 16" style="position:absolute;left:0;top:0"><path d="M3 5.5l3.5-3.5 3.5 3.5M3 10l3.5 3.5 3.5-3.5" fill="none" stroke="#4d6185" stroke-width="2.2"/></svg></div></div>
<div class="a cb" style="left:911px;top:419px;width:57px;height:20px;overflow:hidden"><div class="t" style="left:3px;top:3px">12.468</div><div class="a dd" style="left:40px;top:1px;width:14px;height:16px"><svg width="14" height="16" viewBox="0 0 14 16" style="position:absolute;left:0;top:0"><path d="M3 5.5l3.5-3.5 3.5 3.5M3 10l3.5 3.5 3.5-3.5" fill="none" stroke="#4d6185" stroke-width="2.2"/></svg></div></div>
<div class="a" style="left:686px;top:450px;width:10px;height:10px;background:#808000"></div>
<div class="a chk" style="left:703px;top:448px"></div>
<div class="a cb" style="left:734px;top:445px;width:96px;height:20px"><div class="t" style="left:2px;top:3px"></div><div class="a dd" style="left:79px;top:1px;width:14px;height:16px"><svg width="14" height="16" viewBox="0 0 14 16" style="position:absolute;left:0;top:0"><path d="M3 5.5l4 4 4-4" fill="none" stroke="#4d6185" stroke-width="2.6"/></svg></div></div>
<div class="a cb" style="left:836px;top:445px;width:69px;height:20px;overflow:hidden"><div class="t" style="left:3px;top:3px">0.03125</div><div class="a dd" style="left:52px;top:1px;width:14px;height:16px"><svg width="14" height="16" viewBox="0 0 14 16" style="position:absolute;left:0;top:0"><path d="M3 5.5l3.5-3.5 3.5 3.5M3 10l3.5 3.5 3.5-3.5" fill="none" stroke="#4d6185" stroke-width="2.2"/></svg></div></div>
<div class="a cb" style="left:911px;top:445px;width:57px;height:20px;overflow:hidden"><div class="t" style="left:3px;top:3px">8.468</div><div class="a dd" style="left:40px;top:1px;width:14px;height:16px"><svg width="14" height="16" viewBox="0 0 14 16" style="position:absolute;left:0;top:0"><path d="M3 5.5l3.5-3.5 3.5 3.5M3 10l3.5 3.5 3.5-3.5" fill="none" stroke="#4d6185" stroke-width="2.2"/></svg></div></div>
<div class="a" style="left:686px;top:476px;width:10px;height:10px;background:#008000"></div>
<div class="a chk" style="left:703px;top:474px"></div>
<div class="a cb" style="left:734px;top:471px;width:96px;height:20px"><div class="t" style="left:2px;top:3px"></div><div class="a dd" style="left:79px;top:1px;width:14px;height:16px"><svg width="14" height="16" viewBox="0 0 14 16" style="position:absolute;left:0;top:0"><path d="M3 5.5l4 4 4-4" fill="none" stroke="#4d6185" stroke-width="2.6"/></svg></div></div>
<div class="a cb" style="left:836px;top:471px;width:69px;height:20px;overflow:hidden"><div class="t" style="left:3px;top:3px">0.03125</div><div class="a dd" style="left:52px;top:1px;width:14px;height:16px"><svg width="14" height="16" viewBox="0 0 14 16" style="position:absolute;left:0;top:0"><path d="M3 5.5l3.5-3.5 3.5 3.5M3 10l3.5 3.5 3.5-3.5" fill="none" stroke="#4d6185" stroke-width="2.2"/></svg></div></div>
<div class="a cb" style="left:911px;top:471px;width:57px;height:20px;overflow:hidden"><div class="t" style="left:3px;top:3px">4.468</div><div class="a dd" style="left:40px;top:1px;width:14px;height:16px"><svg width="14" height="16" viewBox="0 0 14 16" style="position:absolute;left:0;top:0"><path d="M3 5.5l3.5-3.5 3.5 3.5M3 10l3.5 3.5 3.5-3.5" fill="none" stroke="#4d6185" stroke-width="2.2"/></svg></div></div>
<div class="a" style="left:686px;top:502px;width:10px;height:10px;background:#0000ff"></div>
<div class="a chk" style="left:703px;top:500px"></div>
<div class="a cb" style="left:734px;top:497px;width:96px;height:20px"><div class="t" style="left:2px;top:3px"></div><div class="a dd" style="left:79px;top:1px;width:14px;height:16px"><svg width="14" height="16" viewBox="0 0 14 16" style="position:absolute;left:0;top:0"><path d="M3 5.5l4 4 4-4" fill="none" stroke="#4d6185" stroke-width="2.6"/></svg></div></div>
<div class="a cb" style="left:836px;top:497px;width:69px;height:20px;overflow:hidden"><div class="t" style="left:3px;top:3px">25000</div><div class="a dd" style="left:52px;top:1px;width:14px;height:16px"><svg width="14" height="16" viewBox="0 0 14 16" style="position:absolute;left:0;top:0"><path d="M3 5.5l3.5-3.5 3.5 3.5M3 10l3.5 3.5 3.5-3.5" fill="none" stroke="#4d6185" stroke-width="2.2"/></svg></div></div>
<div class="a cb" style="left:911px;top:497px;width:57px;height:20px;overflow:hidden"><div class="t" style="left:3px;top:3px">0.233</div><div class="a dd" style="left:40px;top:1px;width:14px;height:16px"><svg width="14" height="16" viewBox="0 0 14 16" style="position:absolute;left:0;top:0"><path d="M3 5.5l3.5-3.5 3.5 3.5M3 10l3.5 3.5 3.5-3.5" fill="none" stroke="#4d6185" stroke-width="2.2"/></svg></div></div>
<div class="a" style="left:686px;top:528px;width:10px;height:10px;background:#400080"></div>
<div class="a chk" style="left:703px;top:526px"></div>
<div class="a cb" style="left:734px;top:523px;width:96px;height:20px"><div class="t" style="left:2px;top:3px"></div><div class="a dd" style="left:79px;top:1px;width:14px;height:16px"><svg width="14" height="16" viewBox="0 0 14 16" style="position:absolute;left:0;top:0"><path d="M3 5.5l4 4 4-4" fill="none" stroke="#4d6185" stroke-width="2.6"/></svg></div></div>
<div class="a cb" style="left:836px;top:523px;width:69px;height:20px;overflow:hidden"><div class="t" style="left:3px;top:3px">0.03125</div><div class="a dd" style="left:52px;top:1px;width:14px;height:16px"><svg width="14" height="16" viewBox="0 0 14 16" style="position:absolute;left:0;top:0"><path d="M3 5.5l3.5-3.5 3.5 3.5M3 10l3.5 3.5 3.5-3.5" fill="none" stroke="#4d6185" stroke-width="2.2"/></svg></div></div>
<div class="a cb" style="left:911px;top:523px;width:57px;height:20px;overflow:hidden"><div class="t" style="left:3px;top:3px">-3.532</div><div class="a dd" style="left:40px;top:1px;width:14px;height:16px"><svg width="14" height="16" viewBox="0 0 14 16" style="position:absolute;left:0;top:0"><path d="M3 5.5l3.5-3.5 3.5 3.5M3 10l3.5 3.5 3.5-3.5" fill="none" stroke="#4d6185" stroke-width="2.2"/></svg></div></div>
<div class="a" style="left:686px;top:554px;width:10px;height:10px;background:#ff00ff"></div>
<div class="a chk" style="left:703px;top:552px"></div>
<div class="a cb" style="left:734px;top:549px;width:96px;height:20px"><div class="t" style="left:2px;top:3px"></div><div class="a dd" style="left:79px;top:1px;width:14px;height:16px"><svg width="14" height="16" viewBox="0 0 14 16" style="position:absolute;left:0;top:0"><path d="M3 5.5l4 4 4-4" fill="none" stroke="#4d6185" stroke-width="2.6"/></svg></div></div>
<div class="a cb" style="left:836px;top:549px;width:69px;height:20px;overflow:hidden"><div class="t" style="left:3px;top:3px">2.49954</div><div class="a dd" style="left:52px;top:1px;width:14px;height:16px"><svg width="14" height="16" viewBox="0 0 14 16" style="position:absolute;left:0;top:0"><path d="M3 5.5l3.5-3.5 3.5 3.5M3 10l3.5 3.5 3.5-3.5" fill="none" stroke="#4d6185" stroke-width="2.2"/></svg></div></div>
<div class="a cb" style="left:911px;top:549px;width:57px;height:20px;overflow:hidden"><div class="t" style="left:3px;top:3px">-7.532</div><div class="a dd" style="left:40px;top:1px;width:14px;height:16px"><svg width="14" height="16" viewBox="0 0 14 16" style="position:absolute;left:0;top:0"><path d="M3 5.5l3.5-3.5 3.5 3.5M3 10l3.5 3.5 3.5-3.5" fill="none" stroke="#4d6185" stroke-width="2.2"/></svg></div></div>
<div class="a" style="left:686px;top:580px;width:10px;height:10px;background:#000000"></div>
<div class="a chk" style="left:703px;top:578px"><svg width="11" height="11" viewBox="0 0 11 11" style="position:absolute;left:0;top:0"><path d="M2.5 5l2 2.2 4-4.5" fill="none" stroke="#21a121" stroke-width="1.8"/></svg></div>
<div class="a cb" style="left:734px;top:575px;width:96px;height:20px"><div class="t" style="left:2px;top:3px">_RPA Axis A ref</div><div class="a dd" style="left:79px;top:1px;width:14px;height:16px"><svg width="14" height="16" viewBox="0 0 14 16" style="position:absolute;left:0;top:0"><path d="M3 5.5l4 4 4-4" fill="none" stroke="#4d6185" stroke-width="2.6"/></svg></div></div>
<div class="a cb" style="left:836px;top:575px;width:69px;height:20px;overflow:hidden"><div class="t" style="left:3px;top:3px">100000 cc</div><div class="a dd" style="left:52px;top:1px;width:14px;height:16px"><svg width="14" height="16" viewBox="0 0 14 16" style="position:absolute;left:0;top:0"><path d="M3 5.5l3.5-3.5 3.5 3.5M3 10l3.5 3.5 3.5-3.5" fill="none" stroke="#4d6185" stroke-width="2.2"/></svg></div></div>
<div class="a cb" style="left:911px;top:575px;width:57px;height:20px;overflow:hidden"><div class="t" style="left:3px;top:3px">-3.588</div><div class="a dd" style="left:40px;top:1px;width:14px;height:16px"><svg width="14" height="16" viewBox="0 0 14 16" style="position:absolute;left:0;top:0"><path d="M3 5.5l3.5-3.5 3.5 3.5M3 10l3.5 3.5 3.5-3.5" fill="none" stroke="#4d6185" stroke-width="2.2"/></svg></div></div>
<div class="t" style="left:734px;top:605px;color:#8a8a8a">t</div>
<div class="a cb" style="left:836px;top:601px;width:69px;height:20px;overflow:hidden"><div class="t" style="left:3px;top:3px">100.097 m</div><div class="a dd" style="left:52px;top:1px;width:14px;height:16px"><svg width="14" height="16" viewBox="0 0 14 16" style="position:absolute;left:0;top:0"><path d="M3 5.5l3.5-3.5 3.5 3.5M3 10l3.5 3.5 3.5-3.5" fill="none" stroke="#4d6185" stroke-width="2.2"/></svg></div></div>
<div class="a cb" style="left:911px;top:601px;width:57px;height:20px;overflow:hidden"><div class="t" style="left:3px;top:3px">-2.529</div><div class="a dd" style="left:40px;top:1px;width:14px;height:16px"><svg width="14" height="16" viewBox="0 0 14 16" style="position:absolute;left:0;top:0"><path d="M3 5.5l3.5-3.5 3.5 3.5M3 10l3.5 3.5 3.5-3.5" fill="none" stroke="#4d6185" stroke-width="2.2"/></svg></div></div>
<div class="t" style="left:676px;top:642px;color:#0046d5">Trigger</div>
<div class="a" style="left:711px;top:648px;width:268px;height:1px;background:#b8b5a4;box-shadow:0 1px 0 #fff"></div>
<div class="t" style="left:685px;top:670px">Channel</div>
<div class="a cb" style="left:730px;top:666px;width:62px;height:21px"><div class="t" style="left:2px;top:4px"><span style="display:inline-block;width:10px;height:10px;background:#f00;vertical-align:-1px;margin:0 8px 0 5px"></span>_RP/</div><div class="a dd" style="left:45px;top:1px;width:14px;height:17px"><svg width="14" height="16" viewBox="0 0 14 16" style="position:absolute;left:0;top:0"><path d="M3 5.5l4 4 4-4" fill="none" stroke="#4d6185" stroke-width="2.6"/></svg></div></div>
<div class="t" style="left:797px;top:670px">Edge</div>
<div class="a cb" style="left:828px;top:666px;width:31px;height:20px"><div class="t" style="left:2px;top:3px">/</div><div class="a dd" style="left:14px;top:1px;width:14px;height:16px"><svg width="14" height="16" viewBox="0 0 14 16" style="position:absolute;left:0;top:0"><path d="M3 5.5l4 4 4-4" fill="none" stroke="#4d6185" stroke-width="2.6"/></svg></div></div>
<div class="t" style="left:865px;top:670px">Level</div>
<div class="a cb" style="left:896px;top:666px;width:75px;height:20px;overflow:hidden"><div class="t" style="left:3px;top:3px">1 counts</div><div class="a dd" style="left:58px;top:1px;width:14px;height:16px"><svg width="14" height="16" viewBox="0 0 14 16" style="position:absolute;left:0;top:0"><path d="M3 5.5l3.5-3.5 3.5 3.5M3 10l3.5 3.5 3.5-3.5" fill="none" stroke="#4d6185" stroke-width="2.2"/></svg></div></div>
<div class="t" style="left:691px;top:699px">Mode</div>
<div class="a cb" style="left:730px;top:694px;width:62px;height:20px"><div class="t" style="left:2px;top:3px">Repeat</div><div class="a dd" style="left:45px;top:1px;width:14px;height:16px"><svg width="14" height="16" viewBox="0 0 14 16" style="position:absolute;left:0;top:0"><path d="M3 5.5l4 4 4-4" fill="none" stroke="#4d6185" stroke-width="2.6"/></svg></div></div>
<div class="t" style="left:827px;top:698px;letter-spacing:-0.5px">READY</div>
<div class="a" style="left:897px;top:694px;width:73px;height:21px;border:1px solid #003c74;border-radius:3px;background:linear-gradient(to bottom,#fff 0,#f5f4ef 30%,#ecebe4 80%,#d8d5c8 100%)"></div>
<div class="t" style="left:921px;top:699px">Stop</div>
<svg class="a" style="left:976px;top:741px" width="14" height="13" viewBox="0 0 14 13"><rect x="11" y="3" width="2" height="2" fill="#fff"/><rect x="10" y="2" width="2" height="2" fill="#aca899"/><rect x="7" y="7" width="2" height="2" fill="#fff"/><rect x="6" y="6" width="2" height="2" fill="#aca899"/><rect x="11" y="7" width="2" height="2" fill="#fff"/><rect x="10" y="6" width="2" height="2" fill="#aca899"/><rect x="3" y="11" width="2" height="2" fill="#fff"/><rect x="2" y="10" width="2" height="2" fill="#aca899"/><rect x="7" y="11" width="2" height="2" fill="#fff"/><rect x="6" y="10" width="2" height="2" fill="#aca899"/><rect x="11" y="11" width="2" height="2" fill="#fff"/><rect x="10" y="10" width="2" height="2" fill="#aca899"/></svg>
<div class="t" style="left:175px;top:723px">d_RPA = 200000 counts/s <span style="color:#f00">_RPA</span> d/dt_RPA <span style="color:#808080">dt = 384.85 ms, 1/dt = 2.6 Hz</span></div>
<!-- /PANEL -->
</body></html>
